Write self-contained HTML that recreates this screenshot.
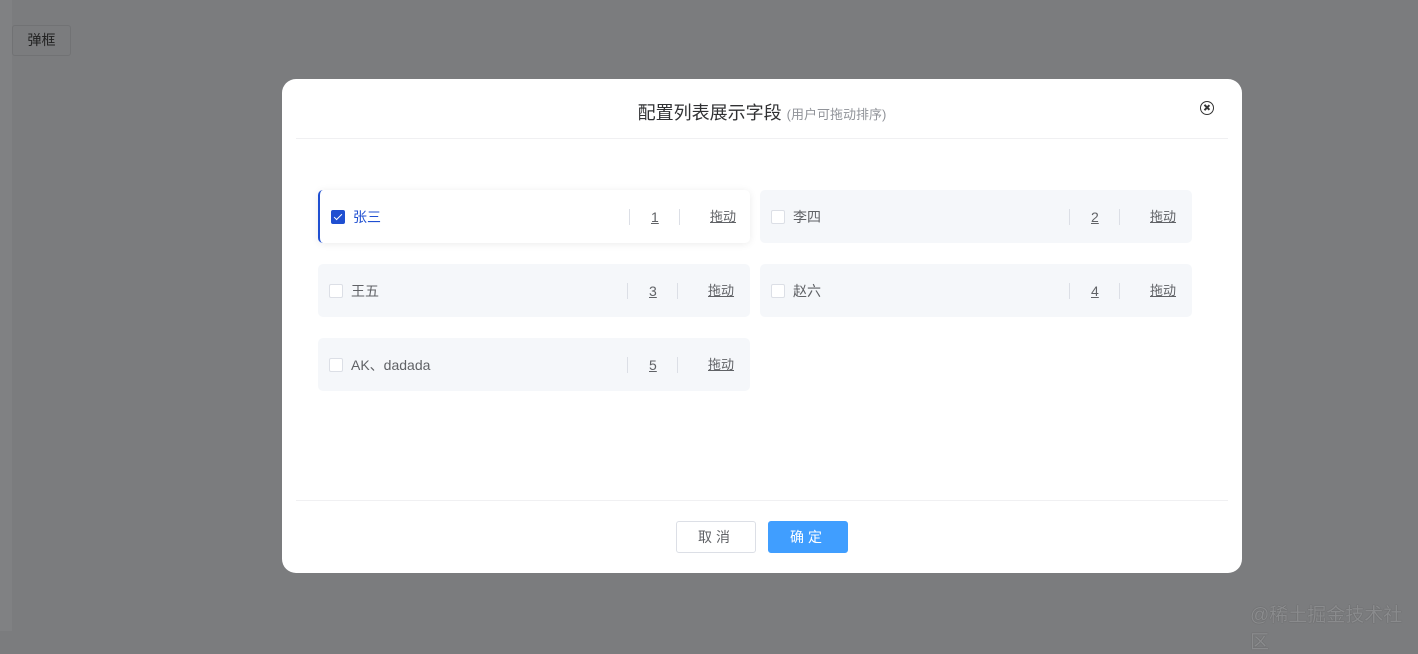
<!DOCTYPE html>
<html><head><meta charset="utf-8"><style>
*{margin:0;padding:0;box-sizing:border-box}
body{width:1418px;height:631px;overflow:hidden;background:#7b7c7e;font-family:"Liberation Sans","Noto Sans CJK SC",sans-serif;position:relative}
.strip{position:absolute;left:0;top:0;width:12px;height:631px;background:#808183}
.btn0{position:absolute;left:12px;top:25px;width:59px;height:31px;border:1px solid #717274;border-radius:3px;color:#222;font-size:14px;line-height:29px;text-align:center;background:#7b7c7e}
.dlg{position:absolute;left:282px;top:79px;width:960px;height:494px;background:#fff;border-radius:14px}
.title{position:absolute;left:0;right:0;top:20px;text-align:center;font-size:18px;color:#303133}
.title small{font-size:13px;color:#909399}
.close{position:absolute;left:918px;top:22px;width:14px;height:14px;border:1.5px solid #333;border-radius:50%}
.close:before,.close:after{content:"";position:absolute;left:4.5px;top:2px;width:1.5px;height:7px;background:#333;transform:rotate(45deg)}
.close:after{transform:rotate(-45deg)}
.hr{position:absolute;left:14px;width:932px;height:1px;background:#f0f0f2}
.item{position:absolute;width:432px;height:53px;background:#f5f7fa;border-radius:5px;font-size:14px;color:#606266}
.item.on{background:#fff;box-shadow:0 1px 8px rgba(0,0,0,.08);border-left:2px solid #1f4fd1;color:#1f4fd1}
.cb{position:absolute;left:11px;top:20px;width:14px;height:14px;border:1px solid #dcdfe6;border-radius:2px;background:#fff}
.on .cb{left:11px;background:#1f4fd1;border-color:#1f4fd1}
.on .cb:after{content:"";position:absolute;left:4px;top:1px;width:3px;height:7px;border:solid #fff;border-width:0 1.5px 1.5px 0;transform:rotate(45deg)}
.lbl{position:absolute;left:33px;top:17px;line-height:20px}
.s1,.s2{position:absolute;top:19px;width:1px;height:16px;background:#dcdfe6}
.s1{left:309px}.s2{left:359px}
.num{position:absolute;left:331px;top:17px;line-height:20px;text-decoration:underline;color:#606266}
.drag{position:absolute;left:390px;top:17px;line-height:20px;text-decoration:underline;color:#606266;font-size:13px}
.on .num,.on .drag{color:#606266}
.b{position:absolute;top:442px;width:80px;height:32px;border-radius:3px;font-size:14px;text-align:center;line-height:30px;letter-spacing:4px}
.wm{position:absolute;left:1250px;top:600px;font-size:19px;color:#8a8b8d;text-shadow:0 0 1px #555}
</style></head><body>
<div class="strip"></div>
<div class="btn0">弹框</div>
<div class="dlg">
<div class="title">配置列表展示字段 <small>(用户可拖动排序)</small></div>
<div class="close"></div>
<div class="hr" style="top:59px"></div>
<div class="hr" style="top:421px"></div>
<div class="b" style="left:394px;border:1px solid #dcdfe6;color:#606266">取消</div>
<div class="b" style="left:486px;background:#409eff;color:#fff;border:1px solid #409eff">确定</div>
</div>
<div class="item on" style="left:318px;top:190px"><span class="cb"></span><span class="lbl">张三</span><span class="s1"></span><span class="num">1</span><span class="s2"></span><span class="drag">拖动</span></div>
<div class="item" style="left:760px;top:190px"><span class="cb"></span><span class="lbl">李四</span><span class="s1"></span><span class="num">2</span><span class="s2"></span><span class="drag">拖动</span></div>
<div class="item" style="left:318px;top:264px"><span class="cb"></span><span class="lbl">王五</span><span class="s1"></span><span class="num">3</span><span class="s2"></span><span class="drag">拖动</span></div>
<div class="item" style="left:760px;top:264px"><span class="cb"></span><span class="lbl">赵六</span><span class="s1"></span><span class="num">4</span><span class="s2"></span><span class="drag">拖动</span></div>
<div class="item" style="left:318px;top:338px"><span class="cb"></span><span class="lbl">AK、dadada</span><span class="s1"></span><span class="num">5</span><span class="s2"></span><span class="drag">拖动</span></div>
<div class="wm">@稀土掘金技术社区</div>
</body></html>
